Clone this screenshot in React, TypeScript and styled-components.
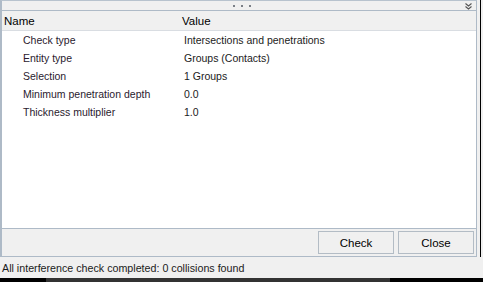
import React from "react";
import styled, { createGlobalStyle } from "styled-components";

const GlobalStyle = createGlobalStyle`
    html, body {
        margin: 0;
        padding: 0;
        background: #f0f0f0;
    }
    * {
        box-sizing: border-box;
    }
`;

const Screen = styled.div`
    width: 483px;
    height: 282px;
    display: flex;
    flex-direction: column;
    background: #f0f0f0;
    font-family: "Liberation Sans", Arial, sans-serif;
    font-size: 10.5px;
    color: #1b1b1b;
    overflow: hidden;
`;

const Workspace = styled.div`
    height: 257px;
    display: flex;
    flex-direction: row;
`;

const Dialog = styled.div`
    width: 477px;
    display: flex;
    flex-direction: column;
    border: 1px solid #aebac7;
    border-left-width: 2px;
    border-top-color: #b8c3ce;
`;

const Gutter = styled.div`
    width: 3px;
    background: #f0f0f0;
`;

const EdgeLine = styled.div`
    width: 1px;
    background: #000;
`;

const Grip = styled.div`
    height: 10px;
    flex: none;
    position: relative;
    display: flex;
    align-items: center;
    justify-content: center;
    gap: 6px;
    border-bottom: 1px solid #aebac7;
    padding-left: 6px;
`;

const Dot = styled.span`
    width: 2px;
    height: 2px;
    background: #7a7f86;
`;

const Collapse = styled.svg`
    position: absolute;
    right: 4px;
    top: 2px;
`;

const Grid = styled.div`
    flex: 1;
    background: #fff;
    display: flex;
    flex-direction: column;
`;

const HeaderRow = styled.div`
    height: 20px;
    display: grid;
    grid-template-columns: 178px 1fr;
    align-items: center;
    background: #f0f0f0;
    border-bottom: 1px solid #d9dde2;
    font-size: 11.5px;
    color: #000;
`;

const HeaderCell = styled.div`
    padding-left: ${(p: { $indent: number }) => p.$indent}px;
`;

const Row = styled.div`
    height: 18px;
    display: grid;
    grid-template-columns: 178px 1fr;
    align-items: center;
`;

const LabelCell = styled.div`
    padding-left: 21px;
    color: #2a1a2e;
    white-space: nowrap;
`;

const ValueCell = styled.div`
    padding-left: 4px;
    color: #1b1b1b;
    white-space: nowrap;
`;

const ButtonBar = styled.div`
    height: 28px;
    flex: none;
    display: flex;
    justify-content: flex-end;
    align-items: flex-start;
    gap: 4px;
    padding: 2px 2px 0 0;
    border-top: 1px solid #aebac7;
`;

const Button = styled.button`
    width: 76px;
    height: 23px;
    border: 1px solid #b3bcc5;
    background: #f0f0f0;
    font-family: inherit;
    font-size: 11.5px;
    color: #000;
    padding: 0;
`;

const StatusBar = styled.div`
    height: 21px;
    display: flex;
    align-items: center;
    padding: 1px 0 0 2px;
    font-size: 10.7px;
    color: #1b1b1b;
    white-space: nowrap;
`;

const Taskbar = styled.div`
    height: 4px;
    display: flex;
    background: #000;
`;

const TaskSegment = styled.div`
    width: ${(p: { $w: number }) => p.$w}px;
    background: #333;
`;

const TaskGap = styled.div`
    width: ${(p: { $w: number }) => p.$w}px;
`;

const properties = [
    ["Check type", "Intersections and penetrations"],
    ["Entity type", "Groups (Contacts)"],
    ["Selection", "1 Groups"],
    ["Minimum penetration depth", "0.0"],
    ["Thickness multiplier", "1.0"],
];

export default function App() {
    return (
        <Screen>
            <GlobalStyle />
            <Workspace>
                <Dialog>
                    <Grip>
                        <Dot />
                        <Dot />
                        <Dot />
                        <Collapse width="7" height="7" viewBox="0 0 7 7">
                            <path d="M0.5 0.5 L3.5 3 L6.5 0.5 M0.5 3.5 L3.5 6 L6.5 3.5" stroke="#555" strokeWidth="1.1" fill="none" />
                        </Collapse>
                    </Grip>
                    <Grid>
                        <HeaderRow>
                            <HeaderCell $indent={2}>Name</HeaderCell>
                            <HeaderCell $indent={2}>Value</HeaderCell>
                        </HeaderRow>
                        {properties.map(([label, value]) => (
                            <Row key={label}>
                                <LabelCell>{label}</LabelCell>
                                <ValueCell>{value}</ValueCell>
                            </Row>
                        ))}
                    </Grid>
                    <ButtonBar>
                        <Button>Check</Button>
                        <Button>Close</Button>
                    </ButtonBar>
                </Dialog>
                <Gutter />
                <EdgeLine />
            </Workspace>
            <StatusBar>All interference check completed: 0 collisions found</StatusBar>
            <Taskbar>
                <TaskGap $w={46} />
                <TaskSegment $w={344} />
            </Taskbar>
        </Screen>
    );
}
